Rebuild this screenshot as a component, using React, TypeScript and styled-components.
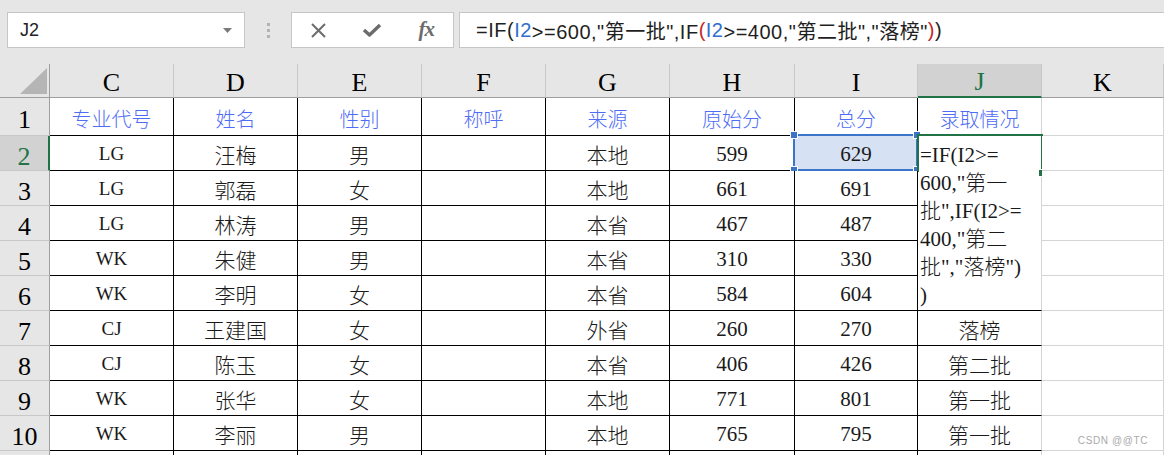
import React from "react";
import styled, { createGlobalStyle } from "styled-components";

const GlobalStyle = createGlobalStyle`
  html, body {
    margin: 0;
    padding: 0;
    background: #fff;
  }
  body {
    overflow: hidden;
  }
`;

const GREEN = "#217346";
const GRID = "#d4d4d4";

const Page = styled.div`
  position: relative;
  width: 1164px;
  height: 455px;
  overflow: hidden;
  background: #fff;
`;

/* ---------- formula toolbar ---------- */

const TopBar = styled.div`
  height: 64px;
  box-sizing: border-box;
  padding: 12px 0 0 7px;
  background: #e6e6e6;
  display: flex;
  align-items: flex-start;
`;

const Box = styled.div`
  height: 36px;
  box-sizing: border-box;
  background: #fff;
  border: 1px solid #c6c6c6;
  display: flex;
  align-items: center;
`;

const NameBox = styled(Box)`
  width: 238px;
  padding: 0 12px 0 12px;
  justify-content: space-between;
  font-family: "Liberation Sans", "Noto Sans", sans-serif;
  font-size: 18px;
  color: #222;
`;

const Grip = styled.div`
  width: 46px;
  height: 36px;
  display: flex;
  flex-direction: column;
  align-items: center;
  justify-content: center;
  gap: 3px;

  span {
    width: 3px;
    height: 3px;
    background: #b3b3b3;
  }
`;

const ActionBox = styled(Box)`
  width: 163px;
  display: grid;
  grid-template-columns: repeat(3, 1fr);
  justify-items: center;
  color: #6c6c6c;
`;

const Fx = styled.span`
  font-family: "Liberation Serif", serif;
  font-style: italic;
  font-weight: bold;
  font-size: 21px;
  color: #6c6c6c;
  letter-spacing: -1px;
  margin-top: -2px;
`;

const FormulaBox = styled(Box)`
  flex: 1;
  margin-left: 5px;
  margin-right: -4px;
  padding-left: 16px;
  font-family: "Liberation Sans", "Noto Sans CJK SC", sans-serif;
  font-size: 20px;
  letter-spacing: 0.5px;
  color: #1f1f1f;
  white-space: pre;
`;

const Ref = styled.span<{ $c: string }>`
  color: ${(p) => p.$c};
`;

/* ---------- sheet grid ---------- */

const Sheet = styled.div`
  display: grid;
  grid-template-columns: 50px 124px 124px 124px 124px 124px 125px 123px 124px 1fr;
  grid-template-rows: 34px 38px repeat(10, 35px);
`;

const Corner = styled.div`
  background: #e6e6e6;
  border-right: 1px solid #9e9e9e;
  border-bottom: 1px solid #9e9e9e;
  box-sizing: border-box;
`;

const ColHead = styled.div<{ $active?: boolean }>`
  box-sizing: border-box;
  display: flex;
  align-items: center;
  justify-content: center;
  padding-top: 4px;
  background: ${(p) => (p.$active ? "#d2d2d2" : "#e6e6e6")};
  border-right: 1px solid #c8c8c8;
  border-bottom: ${(p) => (p.$active ? `2px solid ${GREEN}` : "1px solid #9e9e9e")};
  font-family: "Liberation Serif", serif;
  font-size: 26px;
  color: ${(p) => (p.$active ? GREEN : "#000")};
`;

const RowHead = styled.div<{ $active?: boolean }>`
  box-sizing: border-box;
  display: flex;
  align-items: center;
  justify-content: center;
  padding-top: 7px;
  background: ${(p) => (p.$active ? "#d2d2d2" : "#e6e6e6")};
  border-right: ${(p) => (p.$active ? `2px solid ${GREEN}` : "1px solid #9e9e9e")};
  border-bottom: 1px solid #c8c8c8;
  font-family: "Liberation Serif", serif;
  font-size: 26px;
  color: ${(p) => (p.$active ? GREEN : "#000")};
`;

type Tone = "title" | "code" | "plain";

const Cell = styled.div<{ $rb?: string; $bb?: string; $tone?: Tone; $sel?: boolean }>`
  position: relative;
  box-sizing: border-box;
  display: flex;
  align-items: center;
  justify-content: center;
  background: ${(p) => (p.$sel ? "#d6e1f3" : "#fff")};
  border-right: 1px solid ${(p) => p.$rb ?? "#000"};
  border-bottom: 1px solid ${(p) => p.$bb ?? "#000"};
  font-family: "Liberation Serif", "Noto Sans CJK SC", serif;
  font-weight: 300;
  font-size: ${(p) => (p.$tone === "code" ? "19px" : p.$tone === "title" ? "20px" : "21px")};
  color: ${(p) => (p.$tone === "title" ? "#4f6cf6" : "#1a1a1a")};
  padding-top: ${(p) => (p.$tone === "title" ? "4px" : "2px")};
`;

const EditCell = styled.div`
  position: relative;
  grid-row: span 5;
  box-sizing: border-box;
  background: #fff;
  border-right: 1px solid ${GRID};
  border-bottom: 1px solid #000;
  padding: 5px 0 0 2px;
  font-family: "Liberation Serif", "Noto Sans CJK SC", serif;
  font-weight: 300;
  font-size: 21px;
  line-height: 28px;
  color: #1a1a1a;
  white-space: pre;
`;

const BlueFrame = styled.div`
  position: absolute;
  top: -2px;
  left: -2px;
  right: -1px;
  bottom: -1px;
  border: 2px solid #3b74c8;
  pointer-events: none;
`;

const Handle = styled.i<{ $x: "l" | "r"; $y: "t" | "b"; $c: string }>`
  position: absolute;
  width: 6px;
  height: 6px;
  background: ${(p) => p.$c};
  border: 1px solid #fff;
  ${(p) => (p.$x === "l" ? "left: -5px;" : "right: -5px;")}
  ${(p) => (p.$y === "t" ? "top: -5px;" : "bottom: -5px;")}
`;

const GreenFrame = styled.div`
  position: absolute;
  top: -2px;
  left: -1px;
  right: -2px;
  height: 36px;
  border: 2px solid ${GREEN};
  border-bottom: none;
  pointer-events: none;
`;

const Watermark = styled.div`
  position: absolute;
  right: 16px;
  bottom: 9px;
  font-family: "Liberation Sans", sans-serif;
  font-size: 10px;
  letter-spacing: 0.6px;
  color: #a9a9a9;
`;

const LETTERS = ["C", "D", "E", "F", "G", "H", "I", "J", "K"];
const TITLES = ["专业代号", "姓名", "性别", "称呼", "来源", "原始分", "总分", "录取情况"];

const ROWS: string[][] = [
  ["LG", "汪梅", "男", "", "本地", "599", "629"],
  ["LG", "郭磊", "女", "", "本地", "661", "691"],
  ["LG", "林涛", "男", "", "本省", "467", "487"],
  ["WK", "朱健", "男", "", "本省", "310", "330"],
  ["WK", "李明", "女", "", "本省", "584", "604"],
  ["CJ", "王建国", "女", "", "外省", "260", "270"],
  ["CJ", "陈玉", "女", "", "本省", "406", "426"],
  ["WK", "张华", "女", "", "本地", "771", "801"],
  ["WK", "李丽", "男", "", "本地", "765", "795"],
];

const RESULTS: Record<number, string> = { 7: "落榜", 8: "第二批", 9: "第一批", 10: "第一批" };

const EDIT_TEXT = ['=IF(I2>=', '600,"第一', '批",IF(I2>=', '400,"第二', '批","落榜")', ")"].join("\n");

const CloseIcon = () => (
  <svg width="17" height="17" viewBox="0 0 17 17">
    <path d="M2 2 L15 15 M15 2 L2 15" stroke="currentColor" strokeWidth="2" fill="none" />
  </svg>
);

const CheckIcon = () => (
  <svg width="20" height="14" viewBox="0 0 20 14">
    <path d="M2 7 L7.5 12 L18 2" stroke="currentColor" strokeWidth="3.4" fill="none" strokeLinejoin="round" />
  </svg>
);

const Caret = () => (
  <svg width="9" height="5" viewBox="0 0 9 5">
    <polygon points="0,0 9,0 4.5,5" fill="#7a7a7a" />
  </svg>
);

const SelectAll = () => (
  <svg width="50" height="34" viewBox="0 0 50 34">
    <polygon points="20,30 47,30 47,4" fill="#b5b5b5" />
  </svg>
);

export default function App() {
  return (
    <Page>
      <GlobalStyle />
      <TopBar>
        <NameBox>
          <span>J2</span>
          <Caret />
        </NameBox>
        <Grip>
          <span />
          <span />
          <span />
        </Grip>
        <ActionBox>
          <CloseIcon />
          <CheckIcon />
          <Fx>fx</Fx>
        </ActionBox>
        <FormulaBox>
          =IF(<Ref $c="#2f6fd0">I2</Ref>&gt;=600,"第一批",IF<Ref $c="#c62828">(</Ref>
          <Ref $c="#2f6fd0">I2</Ref>&gt;=400,"第二批","落榜"<Ref $c="#c62828">)</Ref>)
        </FormulaBox>
      </TopBar>

      <Sheet>
        <Corner>
          <SelectAll />
        </Corner>
        {LETTERS.map((l) => (
          <ColHead key={l} $active={l === "J"}>
            {l}
          </ColHead>
        ))}

        <RowHead>1</RowHead>
        {TITLES.map((t, i) => (
          <Cell key={t} $tone="title" $rb={i === 7 ? GRID : "#000"}>
            {t}
          </Cell>
        ))}
        <Cell $rb={GRID} $bb={GRID} />

        {ROWS.map((row, idx) => {
          const r = idx + 2;
          return (
            <React.Fragment key={r}>
              <RowHead $active={r === 2}>{r}</RowHead>
              {row.map((v, c) => {
                const sel = r === 2 && c === 6;
                return (
                  <Cell key={c} $tone={c === 0 ? "code" : "plain"} $sel={sel}>
                    {v}
                    {sel && (
                      <BlueFrame>
                        <Handle $x="l" $y="t" $c="#3b74c8" />
                        <Handle $x="r" $y="t" $c="#3b74c8" />
                        <Handle $x="l" $y="b" $c="#3b74c8" />
                        <Handle $x="r" $y="b" $c="#3b74c8" />
                      </BlueFrame>
                    )}
                  </Cell>
                );
              })}
              {r === 2 && (
                <EditCell>
                  {EDIT_TEXT}
                  <GreenFrame>
                    <Handle $x="r" $y="b" $c={GREEN} />
                  </GreenFrame>
                </EditCell>
              )}
              {r >= 7 && <Cell $rb={GRID}>{RESULTS[r]}</Cell>}
              <Cell $rb={GRID} $bb={GRID} />
            </React.Fragment>
          );
        })}

        <RowHead />
        {LETTERS.map((l) => (
          <Cell key={l} $rb={l === "J" || l === "K" ? GRID : "#000"} $bb={GRID} />
        ))}
      </Sheet>

      <Watermark>CSDN @@TC</Watermark>
    </Page>
  );
}
